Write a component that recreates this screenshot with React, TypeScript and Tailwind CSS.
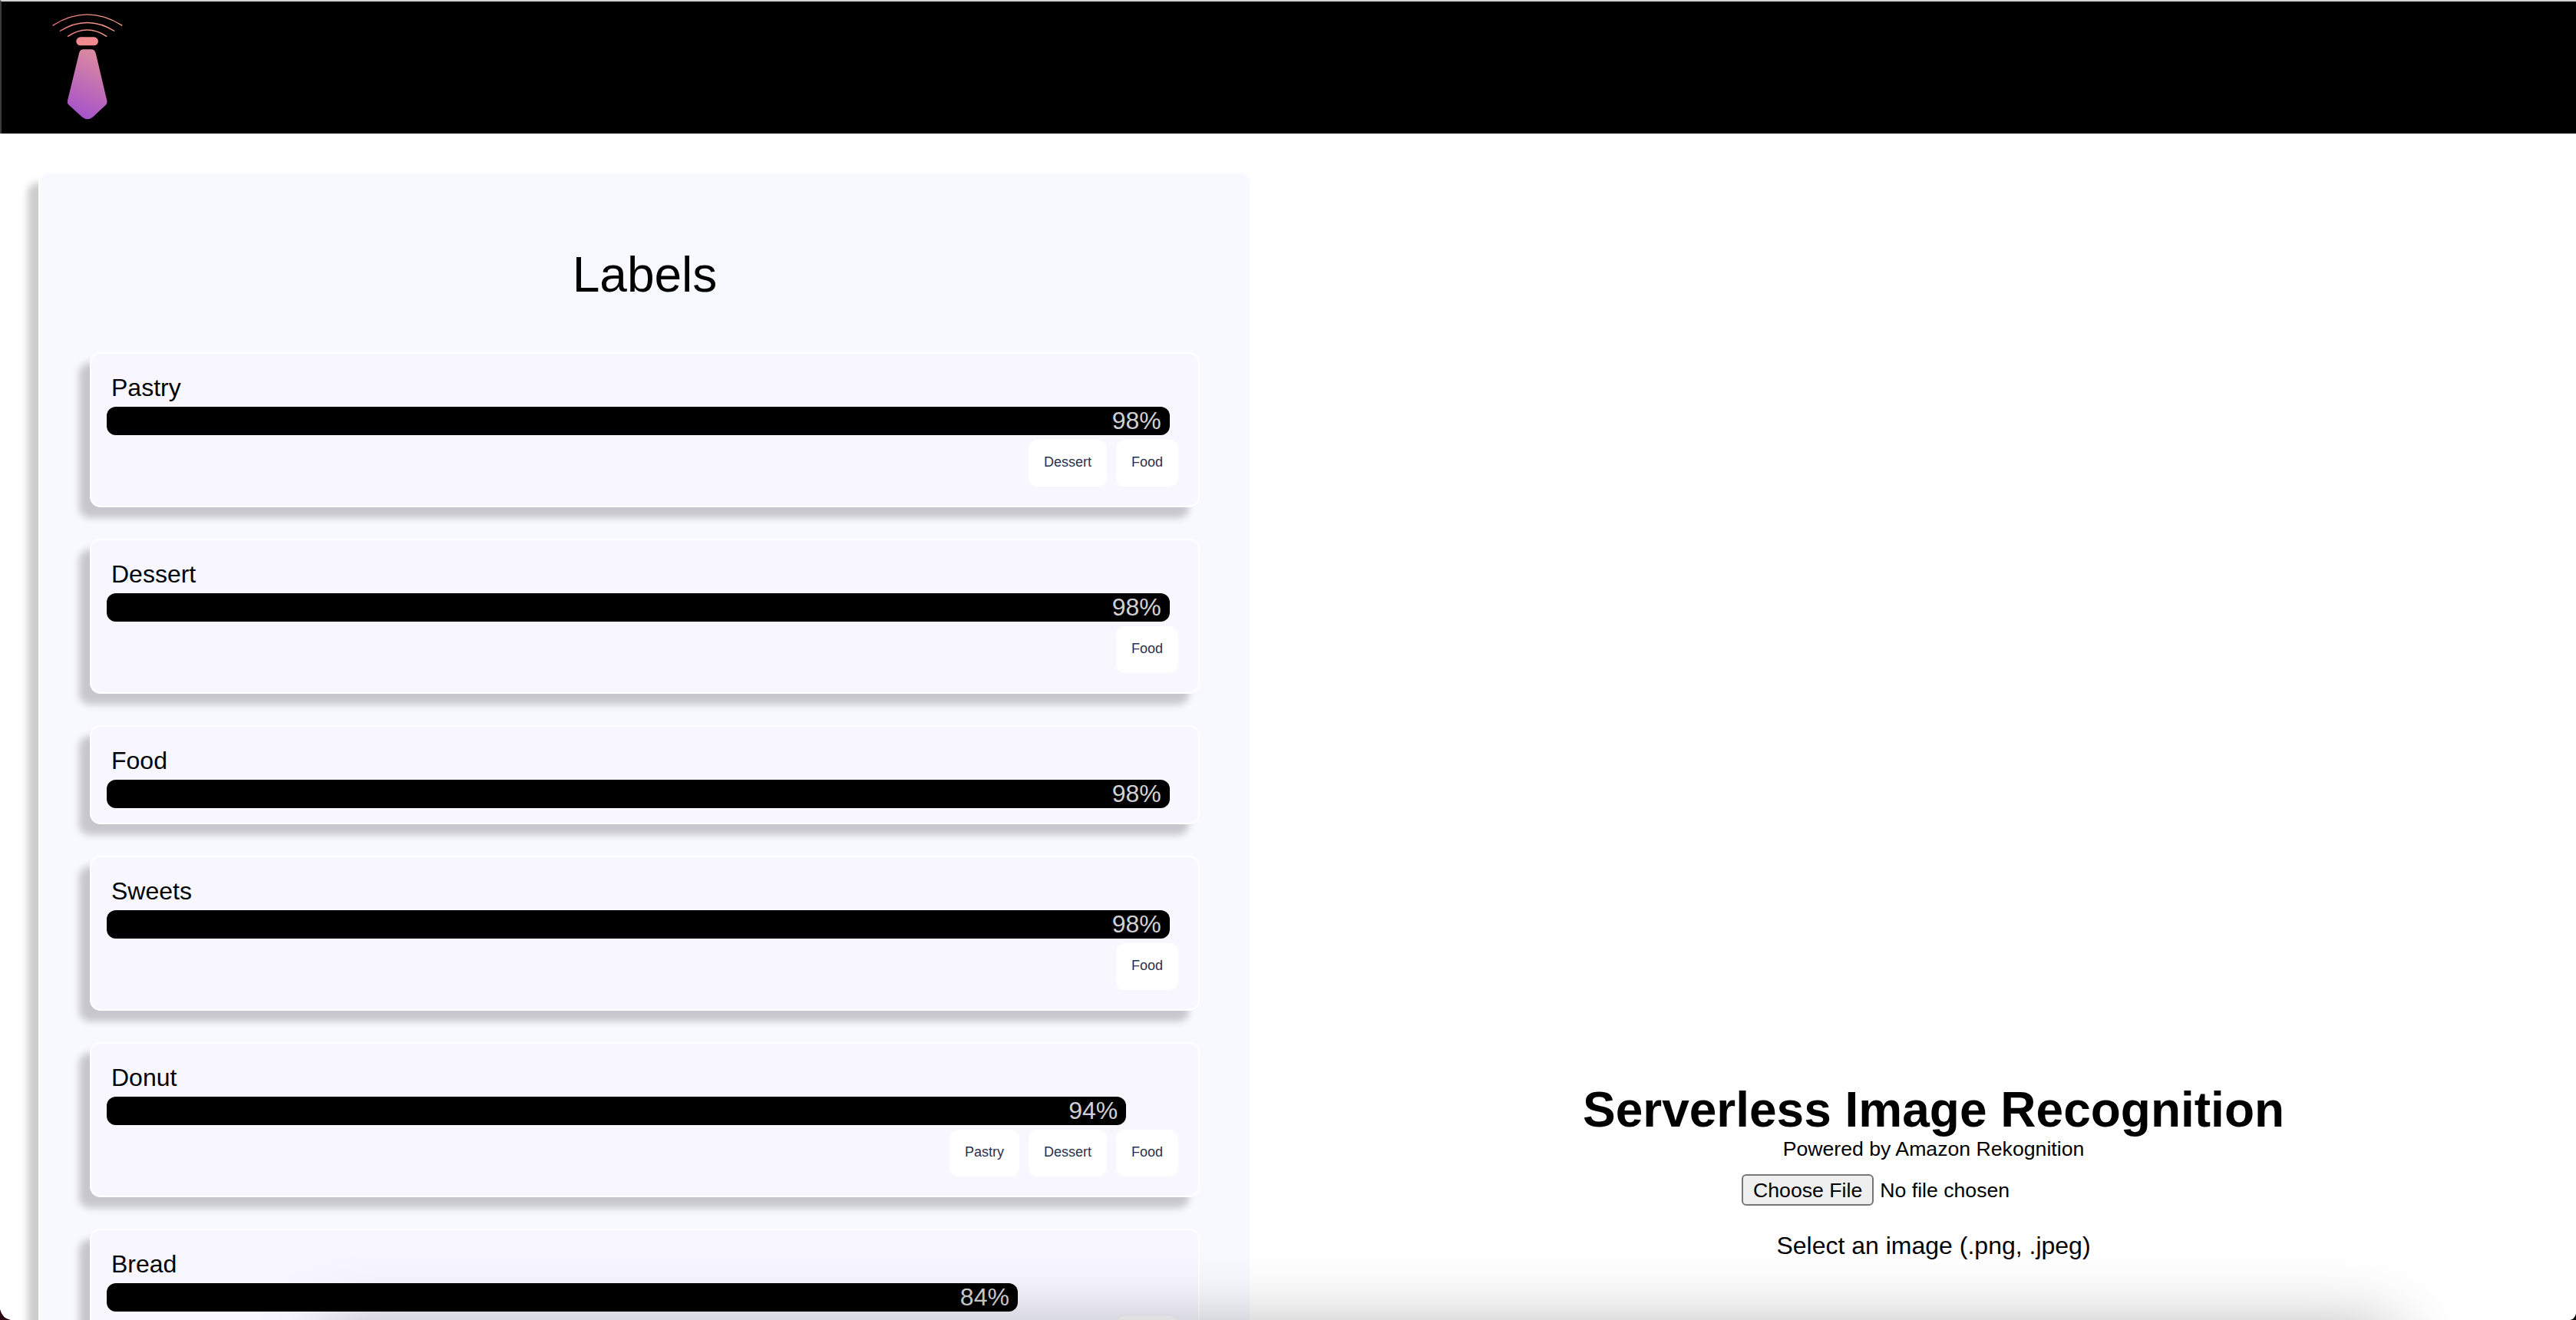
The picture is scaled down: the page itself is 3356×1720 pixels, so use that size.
const labels = [
  { name: "Pastry", score: 98, parents: ["Dessert", "Food"] },
  { name: "Dessert", score: 98, parents: ["Food"] },
  { name: "Food", score: 98, parents: [] },
  { name: "Sweets", score: 98, parents: ["Food"] },
  { name: "Donut", score: 94, parents: ["Pastry", "Dessert", "Food"] },
  { name: "Bread", score: 84, parents: ["Food"] },
];

function Logo() {
  return (
    <svg width="110" height="150" viewBox="60 15 110 150" fill="none">
      <defs>
        <linearGradient id="tie" gradientUnits="userSpaceOnUse" x1="92" y1="142" x2="132" y2="62">
          <stop offset="0" stopColor="#a855c9" />
          <stop offset="1" stopColor="#e0909c" />
        </linearGradient>
        <linearGradient id="waves" gradientUnits="userSpaceOnUse" x1="68" y1="30" x2="160" y2="30">
          <stop offset="0" stopColor="#f0787f" />
          <stop offset="1" stopColor="#f4a58c" />
        </linearGradient>
      </defs>
      <path d="M68.500 33.300Q113.500 4.500 159.300 33.300" stroke="url(#waves)" strokeWidth="1.400" />
      <path d="M78 40.500Q113.500 18.500 149.300 40.500" stroke="url(#waves)" strokeWidth="1.400" />
      <path d="M88 47.600Q113.500 30.500 139.300 47.600" stroke="url(#waves)" strokeWidth="1.400" />
      <rect x="99.300" y="48.300" width="28.700" height="11" rx="5.500" fill="#ee8a90" />
      <path
        d="M109 64.300H118.500Q123.500 64.300 124.800 69.500L139.300 131Q140 135 137.500 137L121 152.500Q114 158 107 152.500L90 137Q87.300 135 88 131L103 69.500Q104 64.300 109 64.300Z"
        fill="url(#tie)"
      />
    </svg>
  );
}

function LabelCard({ name, score, parents }: { name: string; score: number; parents: string[] }) {
  return (
    <div className="bg-[#f8f7ff] border-2 border-white rounded-[14px] shadow-[-14px_14px_10px_rgba(0,0,0,0.2)] pt-[26px] pb-[19px] pl-[20px] pr-[9px]">
      <div className="text-[32px] leading-[37px] ml-[6px] text-black">{name}</div>
      <div className="mt-[6px]">
        <div
          className="h-[37px] bg-black rounded-[12px] text-right text-[32px] leading-[37px] pr-[11px] text-[#d0d0d4]"
          style={{ width: `${score}%` }}
        >
          {score}%
        </div>
      </div>
      {parents.length > 0 && (
        <div className="flex justify-end gap-[12px] mt-[6px] mb-[6px] mr-[17px]">
          {parents.map((p) => (
            <span
              key={p}
              className="h-[61px] px-[20px] bg-white rounded-[12px] text-[18px] leading-[59px] text-[#26324f]"
            >
              {p}
            </span>
          ))}
        </div>
      )}
    </div>
  );
}

export default function App() {
  return (
    <div className="relative h-[1720px] overflow-hidden bg-white font-['Liberation_Sans',Arial,sans-serif] text-black">
      {/* Header */}
      <header className="h-[174px] bg-black border-t-2 border-l-2 border-t-[#d2d2d2] border-l-[#3c3c3c] pl-[58px] pt-[13px]">
        <Logo />
      </header>

      <div className="flex">
        {/* Labels */}
        <div className="w-1/2 pl-[50px] pr-[48px] pt-[50px]">
          <div className="bg-[#f8f8ff] border-2 border-white rounded-[14px] shadow-[-14px_14px_10px_rgba(0,0,0,0.2)] px-[65px] pt-[95px] pb-[40px]">
            <h2 className="text-[64px] leading-[74px] text-center mb-[64px]">Labels</h2>
            <div className="flex flex-col gap-[41px]">
              {labels.map((l) => (
                <LabelCard key={l.name} {...l} />
              ))}
            </div>
          </div>
        </div>

        {/* Upload */}
        <div className="w-1/2 flex flex-col items-center pt-[1235px] pl-[4px]">
          <h1 className="text-[64px] leading-[74px] font-bold">Serverless Image Recognition</h1>
          <p className="text-[26.67px] leading-[29px]">Powered by Amazon Rekognition</p>
          <input
            type="file"
            className="mt-[18px] w-[500px] text-[26.67px] leading-[30px] file:mr-[8px] file:h-[41px] file:px-[13px] file:bg-[#efefef] file:border-2 file:border-[#767676] file:rounded-[6px]"
          />
          <p className="mt-[34px] text-[32px] leading-[37px]">Select an image (.png, .jpeg)</p>
        </div>
      </div>

      {/* next panel sits just under the fold, only its shadow shows */}
      <div className="absolute top-[1730px] left-[420px] w-[2700px] h-[400px] bg-white rounded-[14px] shadow-[0_0_90px_rgba(0,0,0,0.3)]" />

      {/* window corners */}
      <svg className="absolute left-0 bottom-0" width="14" height="14" viewBox="0 0 14 14">
        <path d="M0 0V14H14Q3 12 0 0Z" fill="#2a0510" />
      </svg>
      <svg className="absolute right-0 bottom-0" width="8" height="8" viewBox="0 0 8 8">
        <path d="M8 0V8H0Q6 7 8 0Z" fill="#000" />
      </svg>
    </div>
  );
}
